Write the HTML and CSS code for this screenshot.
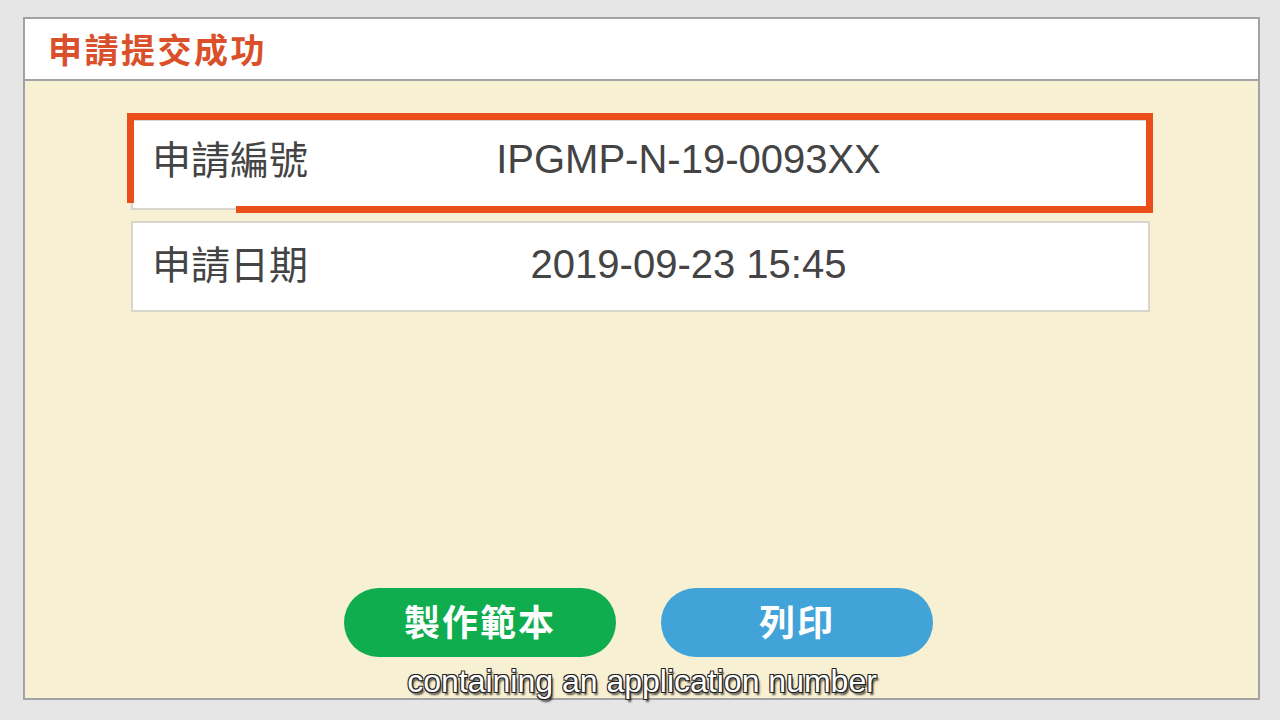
FILE: index.html
```html
<!DOCTYPE html>
<html lang="zh-Hant">
<head>
<meta charset="utf-8">
<title>申請提交成功</title>
<link rel="stylesheet" href="styles.css">
</head>
<body>
<div class="panel">
  <div class="header"><h1 class="title">申請提交成功</h1></div>
  <div class="content">
    <div class="rows">
      <div class="row row-highlight">
        <div class="label">申請編號</div>
        <div class="value">IPGMP-N-19-0093XX</div>
        <svg class="marker" width="1026" height="100" viewBox="0 0 1026 100" aria-hidden="true">
          <rect x="0" y="0" width="1026" height="7" fill="#e94e1b"/>
          <rect x="1019" y="0" width="7" height="100" fill="#e94e1b"/>
          <rect x="0" y="0" width="7" height="90" fill="#e94e1b"/>
          <rect x="109" y="93" width="917" height="7" fill="#e94e1b"/>
        </svg>
      </div>
      <div class="row">
        <div class="label">申請日期</div>
        <div class="value">2019-09-23 15:45</div>
      </div>
    </div>
    <div class="actions">
      <button class="btn btn-green">製作範本</button>
      <button class="btn btn-blue">列印</button>
    </div>
  </div>
</div>
<div class="caption">containing an application number</div>
</body>
</html>
```

FILE: styles.css
```css
html, body {
  margin: 0;
  padding: 0;
}
body {
  width: 1280px;
  height: 720px;
  background: #e6e6e6;
  position: relative;
  overflow: hidden;
  font-family: "Liberation Sans", "Noto Sans CJK TC", sans-serif;
}
.panel {
  margin: 17px 0 0 23px;
  width: 1233px;
  height: 679px;
  border: 2px solid #a3a3a3;
  background: #f8f0d3;
  display: flex;
  flex-direction: column;
}
.header {
  height: 60px;
  background: #ffffff;
  border-bottom: 2px solid #a3a3a3;
  display: flex;
  align-items: center;
  padding-left: 23px;
}
.title {
  margin: 0;
  font-family: "Noto Sans CJK TC", sans-serif;
  font-weight: 700;
  font-size: 34px;
  letter-spacing: 2.5px;
  color: #d9502a;
  line-height: 1;
}
.content {
  flex: 1;
  display: flex;
  flex-direction: column;
}
.rows {
  margin: 38px 0 0 106px;
  width: 1019px;
  display: flex;
  flex-direction: column;
  gap: 11px;
}
.row {
  position: relative;
  height: 87px;
  background: #ffffff;
  border: 2px solid #d8d5cd;
  display: flex;
  align-items: center;
}
.label {
  width: 200px;
  padding-left: 19px;
  margin-top: -9px;
  box-sizing: border-box;
  font-family: "Noto Sans CJK TC", sans-serif;
  font-size: 39px;
  color: #444444;
  line-height: 1;
}
.value {
  flex: 1;
  padding-right: 104px;
  margin-top: -6px;
  text-align: center;
  font-family: "Liberation Sans", sans-serif;
  font-size: 40px;
  color: #444444;
  line-height: 1;
}
.row-highlight .label {
  margin-top: -14px;
}
.row-highlight .value {
  margin-top: -11px;
}
.marker {
  position: absolute;
  left: -6px;
  top: -8px;
}
.actions {
  margin-top: auto;
  padding-bottom: 41px;
  padding-right: 6px;
  display: flex;
  justify-content: center;
  gap: 45px;
}
.btn {
  width: 272px;
  height: 69px;
  border: none;
  border-radius: 35px;
  font-family: "Noto Sans CJK TC", sans-serif;
  font-weight: 700;
  font-size: 36px;
  letter-spacing: 2px;
  color: #ffffff;
  line-height: 1;
  padding: 0 0 6px 0;
}
.btn-green {
  background: #10ad4e;
}
.btn-blue {
  background: #41a3d8;
}
.caption {
  position: absolute;
  left: 0;
  right: 0;
  top: 665px;
  padding-left: 4px;
  text-align: center;
  font-family: "Liberation Sans", sans-serif;
  font-size: 32px;
  line-height: 1;
  color: #ffffff;
  text-shadow:
    -1px -1px 0 #222, 1px -1px 0 #222, -1px 1px 0 #222, 1px 1px 0 #222,
    2px 3px 2px rgba(0, 0, 0, 0.7);
}
```
